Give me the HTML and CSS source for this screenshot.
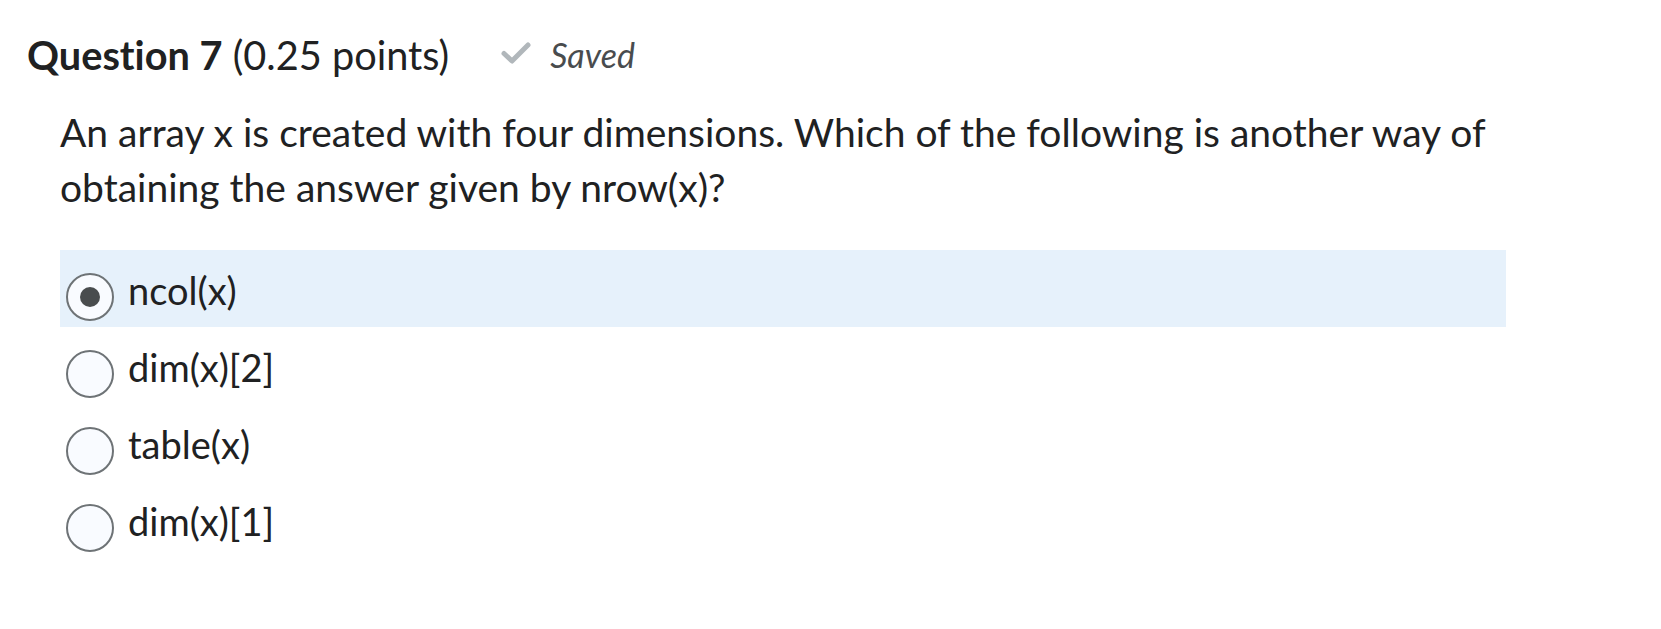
FILE: index.html
```html
<!DOCTYPE html>
<html lang="en">
<head>
<meta charset="utf-8">
<title>Question 7</title>
<link rel="stylesheet" href="styles.css">
</head>
<body>
<div class="question">
  <div class="q-header">
    <h2 class="q-title"><strong>Question 7</strong> <span class="q-points">(0.25 points)</span></h2>
    <div class="q-status">
      <svg class="check" viewBox="0 0 30 22" width="30" height="22" aria-hidden="true">
        <path d="M3 11.5 L11 19 L27 3" fill="none" stroke="#b1b7bb" stroke-width="5" stroke-linecap="round" stroke-linejoin="round"/>
      </svg>
      <span class="saved">Saved</span>
    </div>
  </div>
  <p class="q-text">An array x is created with four dimensions. Which of the following is another way of obtaining the answer given by nrow(x)?</p>
  <div class="options">
    <label class="option selected"><span class="radio checked"></span><span class="opt-text">ncol(x)</span></label>
    <label class="option"><span class="radio"></span><span class="opt-text">dim(x)[2]</span></label>
    <label class="option"><span class="radio"></span><span class="opt-text">table(x)</span></label>
    <label class="option"><span class="radio"></span><span class="opt-text">dim(x)[1]</span></label>
  </div>
</div>
</body>
</html>
```

FILE: styles.css
```css
html, body {
  margin: 0;
  padding: 0;
  background: #ffffff;
}

body {
  font-family: Lato, "Open Sans", "Liberation Sans", sans-serif;
  color: #202122;
  font-variant-ligatures: none;
  font-feature-settings: "liga" 0;
}

.question {
  padding-top: 28px;
}

.q-header {
  display: flex;
  align-items: center;
  padding-left: 27px;
  height: 54px;
}

.q-title {
  margin: 0;
  font-size: 39.7px;
  line-height: 54px;
  font-weight: 400;
  color: #202122;
}

.q-title strong {
  font-weight: 700;
}

.q-status {
  display: flex;
  align-items: center;
  margin-left: 52px;
}

.check {
  display: block;
  margin-right: 19px;
  margin-top: -4px;
}

.saved {
  font-style: italic;
  font-size: 34px;
  color: #494c4e;
  line-height: 54px;
}

.q-text {
  margin: 23px 0 0 60px;
  width: 1446px;
  font-size: 39px;
  line-height: 55px;
}

.options {
  margin: 35px 0 0 60px;
  width: 1446px;
}

.option {
  display: flex;
  align-items: flex-start;
  padding: 11px 0 6px 6px;
  font-size: 38px;
  line-height: 54px;
}

.opt-text {
  padding-top: 2px;
}

.option.selected {
  background: #e6f1fb;
}

.radio {
  flex: none;
  box-sizing: border-box;
  width: 48px;
  height: 48px;
  margin-top: 12px;
  margin-right: 14px;
  border-radius: 50%;
  border: 2px solid #6e7376;
  background: #f9fbff;
  display: flex;
  align-items: center;
  justify-content: center;
}

.radio.checked::after {
  content: "";
  width: 20px;
  height: 20px;
  border-radius: 50%;
  background: #494c4e;
}
```
